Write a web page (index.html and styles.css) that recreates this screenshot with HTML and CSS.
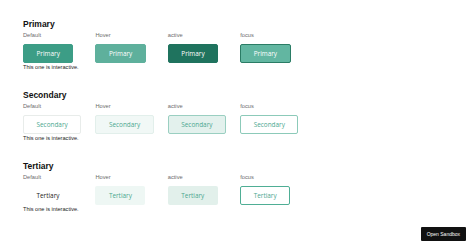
FILE: index.html
```html
<!DOCTYPE html>
<html lang="en">
<head>
  <meta charset="UTF-8">
  <meta name="viewport" content="width=device-width, initial-scale=1.0">
  <title>Buttons</title>
  <link rel="stylesheet" href="styles.css">
</head>
<body>

  <div class="page">
    <section class="group">
      <h2>Primary</h2>
      <div class="states">
        <div class="state">
          <span class="label">Default</span>
          <button class="btn primary">Primary</button>
        </div>
        <div class="state">
          <span class="label">Hover</span>
          <button class="btn primary is-hover">Primary</button>
        </div>
        <div class="state">
          <span class="label">active</span>
          <button class="btn primary is-active">Primary</button>
        </div>
        <div class="state">
          <span class="label">focus</span>
          <button class="btn primary is-focus">Primary</button>
        </div>
      </div>
      <p class="note">This one is interactive.</p>
    </section>

    <section class="group">
      <h2>Secondary</h2>
      <div class="states">
        <div class="state">
          <span class="label">Default</span>
          <button class="btn secondary">Secondary</button>
        </div>
        <div class="state">
          <span class="label">Hover</span>
          <button class="btn secondary is-hover">Secondary</button>
        </div>
        <div class="state">
          <span class="label">active</span>
          <button class="btn secondary is-active">Secondary</button>
        </div>
        <div class="state">
          <span class="label">focus</span>
          <button class="btn secondary is-focus">Secondary</button>
        </div>
      </div>
      <p class="note">This one is interactive.</p>
    </section>

    <section class="group">
      <h2>Tertiary</h2>
      <div class="states">
        <div class="state">
          <span class="label">Default</span>
          <button class="btn tertiary">Tertiary</button>
        </div>
        <div class="state">
          <span class="label">Hover</span>
          <button class="btn tertiary is-hover">Tertiary</button>
        </div>
        <div class="state">
          <span class="label">active</span>
          <button class="btn tertiary is-active">Tertiary</button>
        </div>
        <div class="state">
          <span class="label">focus</span>
          <button class="btn tertiary is-focus">Tertiary</button>
        </div>
      </div>
      <p class="note">This one is interactive.</p>
    </section>
  </div>

  <button class="sandbox">Open Sandbox</button>

</body>
</html>
```

FILE: styles.css
```css
body {
  margin: 0;
  font-family: "Liberation Sans", Arial, sans-serif;
  background-color: #ffffff;
  color: #111;
}
.page {
  padding: 19px 0 0 23px;
}
.group {
  margin-bottom: 19px;
}
h2 {
  margin: 0 0 3px;
  font-size: 8.5px;
  line-height: 10px;
  font-weight: bold;
}
.states {
  display: grid;
  grid-template-columns: repeat(4, 72.4px);
}
.state {
  display: flex;
  flex-direction: column;
  align-items: flex-start;
}
.label {
  font-size: 5.7px;
  line-height: 7px;
  color: #6b6b6b;
  margin-bottom: 5px;
}
.note {
  margin: 1px 0 0;
  font-size: 5.6px;
  line-height: 7px;
  color: #222;
}
.btn {
  box-sizing: border-box;
  height: 19px;
  padding: 0 12.5px;
  border-radius: 2px;
  border: 1px solid transparent;
  font-family: "Open Sans", sans-serif;
  font-size: 6.4px;
  cursor: pointer;
}
.primary {
  background-color: #3c9d86;
  border-color: #3c9d86;
  color: #ffffff;
}
.primary.is-hover {
  background-color: #5eb09c;
  border-color: #5eb09c;
}
.primary.is-active {
  background-color: #1f735e;
  border-color: #1f735e;
}
.primary.is-focus {
  background-color: #62b6a1;
  border-color: #2a7c65;
}
.secondary {
  background-color: #ffffff;
  border-color: #e8ecea;
  color: #4ba78f;
}
.secondary.is-hover {
  background-color: #f1f8f6;
  border-color: #e2efeb;
}
.secondary.is-active {
  background-color: #e3f1ed;
  border-color: #9acfc1;
}
.secondary.is-focus {
  background-color: #ffffff;
  border-color: #8ccab9;
}
.tertiary {
  background-color: transparent;
  color: #222;
}
.tertiary.is-hover {
  background-color: #eef7f4;
  color: #4ba78f;
}
.tertiary.is-active {
  background-color: #e2f0eb;
  color: #4ba78f;
}
.tertiary.is-focus {
  background-color: #ffffff;
  border: 1.5px solid #4fae95;
  color: #4ba78f;
}
.sandbox {
  position: fixed;
  right: 8px;
  bottom: 7px;
  height: 14px;
  padding: 0 6px;
  border: none;
  border-radius: 1px;
  background-color: #111;
  color: #ffffff;
  font-family: "Liberation Sans", Arial, sans-serif;
  font-size: 5px;
  cursor: pointer;
}
```
